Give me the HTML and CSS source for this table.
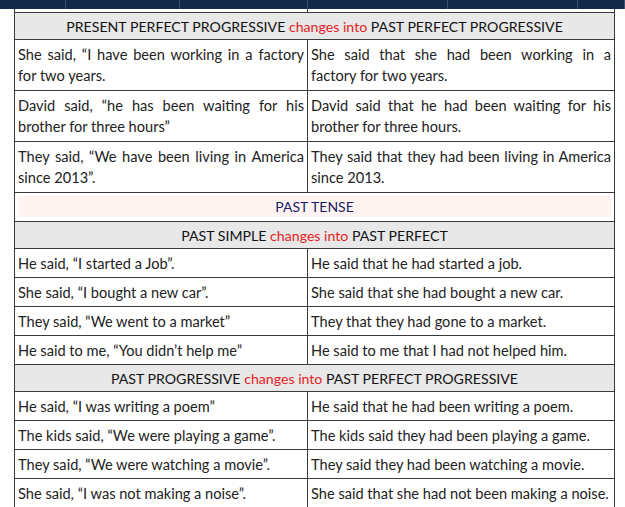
FILE: index.html
```html
<!DOCTYPE html>
<html>
<head>
<meta charset="utf-8">
<link rel="stylesheet" href="styles.css">
</head>
<body>
<div class="topbar">
  <div class="tb-item w1"></div>
  <div class="tb-item w2"></div>
  <div class="tb-item w3"></div>
  <div class="tb-item w4"></div>
  <div class="tb-item w5"></div>
  <div class="tb-item w6"></div>
</div>
<div class="wrap">
<table class="grammar">
  <colgroup><col class="c1"><col class="c2"></colgroup>
  <tr class="stub"><td></td><td></td></tr>
  <tr class="head"><td colspan="2">PRESENT PERFECT PROGRESSIVE <span class="red">changes into</span> PAST PERFECT PROGRESSIVE</td></tr>
  <tr class="two"><td>She said, “I have been working in a factory for two years.</td><td>She said that she had been working in a factory for two years.</td></tr>
  <tr class="two"><td>David said, “he has been waiting for his brother for three hours”</td><td>David said that he had been waiting for his brother for three hours.</td></tr>
  <tr class="two"><td>They said, “We have been living in America since 2013”.</td><td>They said that they had been living in America since 2013.</td></tr>
  <tr class="tense"><td colspan="2"><div class="tense-in">PAST TENSE</div></td></tr>
  <tr class="head"><td colspan="2">PAST SIMPLE <span class="red">changes into</span> PAST PERFECT</td></tr>
  <tr><td>He said, “I started a Job”.</td><td>He said that he had started a job.</td></tr>
  <tr><td>She said, “I bought a new car”.</td><td>She said that she had bought a new car.</td></tr>
  <tr><td>They said, “We went to a market”</td><td>They that they had gone to a market.</td></tr>
  <tr><td>He said to me, “You didn’t help me”</td><td>He said to me that I had not helped him.</td></tr>
  <tr class="head"><td colspan="2">PAST PROGRESSIVE <span class="red">changes into</span> PAST PERFECT PROGRESSIVE</td></tr>
  <tr><td>He said, “I was writing a poem”</td><td>He said that he had been writing a poem.</td></tr>
  <tr><td>The kids said, “We were playing a game”.</td><td>The kids said they had been playing a game.</td></tr>
  <tr><td>They said, “We were watching a movie”.</td><td>They said they had been watching a movie.</td></tr>
  <tr><td>She said, “I was not making a noise”.</td><td>She said that she had not been making a noise.</td></tr>
</table>
</div>
</body>
</html>
```
FILE: styles.css
```css
html, body {
  margin: 0;
  padding: 0;
  background: #ffffff;
}
body {
  font-family: Lato, "Liberation Sans", sans-serif;
  color: #222222;
  font-size: 14.6px;
}
.topbar {
  height: 9px;
  background: #12294a;
  display: flex;
}
.tb-item {
  height: 9px;
  border-right: 1px solid #3b5273;
  box-sizing: border-box;
}
.w1 { width: 66px; }
.w2 { width: 114px; }
.w3 { width: 128px; }
.w4 { width: 140px; }
.w5 { width: 130px; }
.w6 { width: 47px; }
.wrap {
  padding-left: 14px;
}
.grammar {
  border-collapse: collapse;
  width: 600px;
  table-layout: fixed;
}
.c1 { width: 293px; }
.c2 { width: 307px; }
.grammar td {
  border: 1px solid #3a3a3a;
  padding: 4px 3px 3px 3px;
  line-height: 21px;
  text-align: justify;
  vertical-align: top;
}
.grammar tr.two td {
  padding-bottom: 4px;
}
.grammar tr.stub td {
  height: 3px;
  padding: 0;
  line-height: 0;
  border-top: none;
}
.grammar tr.head td {
  background: #e8e8e8;
  text-align: center;
  padding: 3px 3px 2px 3px;
  color: #111111;
  font-size: 14.15px;
}
.red {
  color: #e41e26;
}
.grammar tr.tense td {
  padding: 3px 3px 4px 3px;
}
.tense-in {
  background: #fff4f2;
  text-align: center;
  color: #1b1b66;
  font-size: 14px;
  line-height: 21px;
}
```
